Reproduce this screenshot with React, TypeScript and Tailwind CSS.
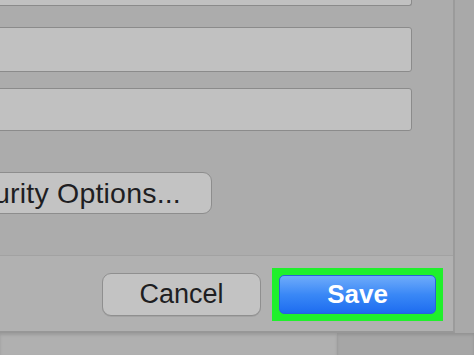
import React from "react";

// Zoomed crop of a macOS save sheet: the fields and the security button run
// off the left edge, the footer holds Cancel and the highlighted Save button.
function Field({ className }: { className: string }) {
  return (
    <div
      className={`-ml-[4px] w-[416px] rounded-[3px] border-[1.5px] border-[#8b8b8b] bg-[#c1c1c1] ${className}`}
    />
  );
}

export default function App() {
  return (
    <div
      className="flex h-[355px] w-[474px] flex-col overflow-hidden bg-[#a8a8a8]"
      style={{ fontFamily: '"Liberation Sans", Arial, sans-serif' }}
    >
      <div className="flex">
        <div className="flex h-[333px] w-[455px] shrink-0 flex-col border-r-2 border-b-2 border-r-[#9b9b9b] border-b-[#979797] bg-[#acacac]">
          <div className="flex h-[256px] shrink-0 flex-col border-b border-[#a2a2a2]">
            <div className="-ml-[4px] h-[6px] w-[416px] rounded-b-[3px] border-[1.5px] border-t-0 border-[#8b8b8b] bg-[#c1c1c1]" />
            <Field className="mt-[21px] h-[45px]" />
            <Field className="mt-[16px] h-[43px]" />
            <div className="mt-[41px] -ml-[89px] flex h-[42px] w-[301px] items-center justify-end rounded-[9px] border-[1.5px] border-[#8d8d8d] bg-[#c3c3c3] pr-[30px] text-[28.5px] tracking-[0.2px] text-[#1e1e22]">
              Security Options...
            </div>
          </div>
          <div className="flex flex-1 items-center justify-end gap-[11px] bg-[#b1b1b1] pr-[10px] pt-[2px]">
            <div className="flex h-[43px] w-[159px] items-center justify-center rounded-[9px] border-[1.5px] border-[#8f8f8f] bg-[#c3c3c3] pb-[1px] text-[27px] text-[#1e1e22] shadow-[0_1px_0_rgba(0,0,0,0.08)]">
              Cancel
            </div>
            <div className="border-[6px] border-[#1ff02c] bg-[#1ff02c] p-[1px]">
              <div className="flex h-[39px] w-[157px] items-center justify-center rounded-[5px] border border-[#2a63d8] bg-gradient-to-b from-[#6eabfa] via-[#3a88f6] to-[#1d6cf0] pb-[1px] text-[26px] font-bold text-white">
                Save
              </div>
            </div>
          </div>
        </div>
        <div className="flex-1 bg-[#a9a9a9]" />
      </div>
      <div className="flex flex-1">
        <div className="w-[337px] bg-[#b0b0b0] shadow-[inset_0_2px_3px_rgba(0,0,0,0.12)]" />
        <div className="flex-1 bg-[#a6a6a6] shadow-[inset_0_2px_3px_rgba(0,0,0,0.12)]" />
      </div>
    </div>
  );
}
